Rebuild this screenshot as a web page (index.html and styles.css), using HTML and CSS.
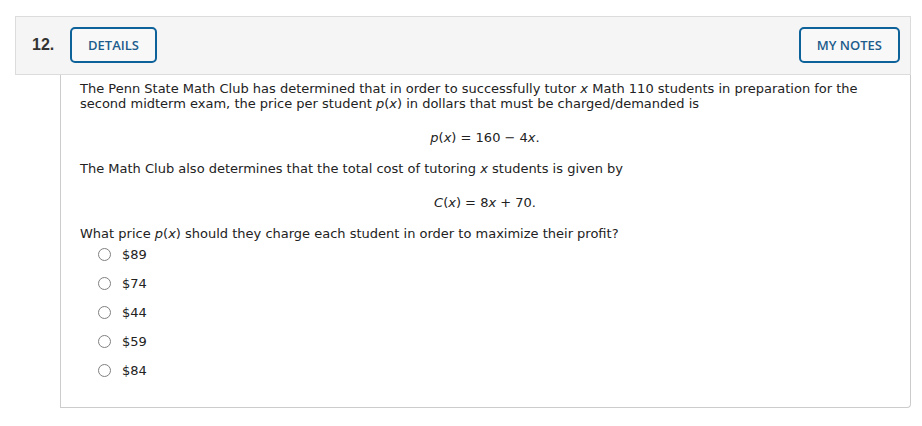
FILE: index.html
```html
<!DOCTYPE html>
<html>
<head>
<meta charset="utf-8">
<link rel="stylesheet" href="styles.css">
</head>
<body>
<div class="question">
  <div class="qhead">
    <span class="qnum">12.</span>
    <button class="btn">DETAILS</button>
    <span class="spacer"></span>
    <button class="btn">MY NOTES</button>
  </div>
  <div class="qbody">
    <p class="para">The Penn State Math Club has determined that in order to successfully tutor <i>x</i> Math 110 students in preparation for the second midterm exam, the price per student <i>p</i>(<i>x</i>) in dollars that must be charged/demanded is</p>
    <p class="eq"><i>p</i>(<i>x</i>) = 160 &minus; 4<i>x</i>.</p>
    <p class="para">The Math Club also determines that the total cost of tutoring <i>x</i> students is given by</p>
    <p class="eq"><i>C</i>(<i>x</i>) = 8<i>x</i> + 70.</p>
    <p class="para">What price <i>p</i>(<i>x</i>) should they charge each student in order to maximize their profit?</p>
    <ul class="options">
      <li class="opt"><span class="radio"></span><span>$89</span></li>
      <li class="opt"><span class="radio"></span><span>$74</span></li>
      <li class="opt"><span class="radio"></span><span>$44</span></li>
      <li class="opt"><span class="radio"></span><span>$59</span></li>
      <li class="opt"><span class="radio"></span><span>$84</span></li>
    </ul>
  </div>
</div>
</body>
</html>
```
FILE: styles.css
```css
html, body {
  margin: 0;
  padding: 0;
  background: #fff;
}
body {
  padding: 16px 11px 0 15px;
  font-family: "DejaVu Sans", Verdana, sans-serif;
  color: #222;
}
.qhead {
  display: flex;
  align-items: center;
  height: 57px;
  border: 1px solid #dcdcdc;
  background: #f5f5f5;
  padding: 0 10px 0 16px;
}
.qnum {
  font-family: "Liberation Sans", Arial, sans-serif;
  font-weight: bold;
  font-size: 16px;
  color: #333;
  width: 38px;
  margin-top: -2px;
}
.spacer { flex: 1; }
.btn {
  font-family: "Open Sans", sans-serif;
  font-size: 13px;
  font-weight: 600;
  color: #1d5c8c;
  background: #f8f8f8;
  border: 2px solid #0e629a;
  border-radius: 5px;
  height: 36px;
  padding: 0 16px;
  margin-top: -1px;
}
.qbody {
  margin-left: 45px;
  border: 1px solid #cccccc;
  border-top: none;
  border-bottom-right-radius: 4px;
  height: 326px;
  padding: 6px 30px 0 19px;
  font-size: 13px;
  line-height: 15px;
}
.para {
  margin: 0;
}
.eq {
  margin: 19px 0 16px;
  text-align: center;
  padding-left: 10px;
}
.options {
  list-style: none;
  margin: -1px 0 0;
  padding: 0 0 0 18px;
}
.opt {
  display: flex;
  align-items: center;
  height: 29px;
}
.radio {
  width: 11px;
  height: 11px;
  border: 1px solid #808080;
  border-radius: 50%;
  margin-right: 11px;
  background: #fff;
}
```
